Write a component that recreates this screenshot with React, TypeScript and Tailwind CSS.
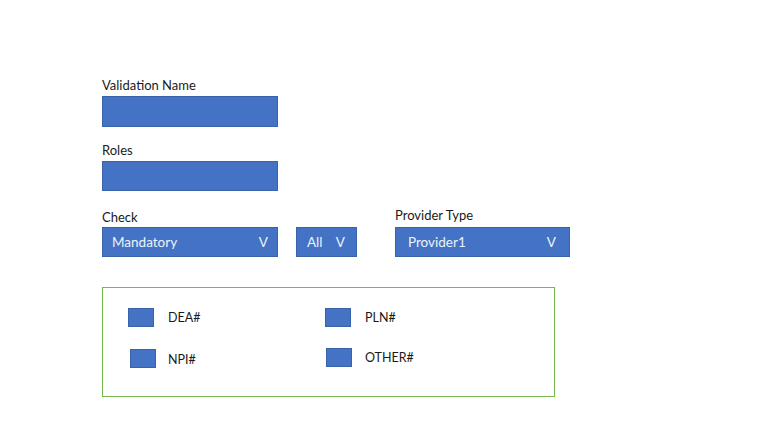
const boxes = [
  { label: "DEA#", box: "ml-0 mt-0", text: "ml-[14px]" },
  { label: "PLN#", box: "ml-0 mt-0", text: "ml-[14px]" },
  { label: "NPI#", box: "ml-[2px] mt-[1px]", text: "ml-[12px] mt-[3px]" },
  { label: "OTHER#", box: "ml-[1px] -mt-[1px]", text: "ml-[13px]" },
];

function Select({ value, width, gap }: { value: string; width: string; gap: string }) {
  return (
    <div
      className={`${width} h-[30px] bg-[#4472c4] border border-[#3a62a8] flex items-center justify-between text-[13.5px] text-[#eef2fa] ${gap}`}
    >
      <span>{value}</span>
      <span>V</span>
    </div>
  );
}

export default function App() {
  return (
    <div className="w-[768px] h-[433px] bg-white pt-[77px] pl-[102px] text-[#1a1a1a] font-['Lato','Liberation_Sans',sans-serif]">
      <div className="text-[13px] leading-[16px]">Validation Name</div>
      <div className="mt-[3px] w-[176px] h-[31px] bg-[#4472c4] border border-[#3a62a8]" />

      <div className="mt-[15px] text-[13px] leading-[16px]">Roles</div>
      <div className="mt-[3px] w-[176px] h-[30px] bg-[#4472c4] border border-[#3a62a8]" />

      <div className="mt-[16px] flex items-end">
        <div className="flex flex-col">
          <div className="text-[13px] leading-[16px]">Check</div>
          <div className="mt-[2px]">
            <Select value="Mandatory" width="w-[176px]" gap="pl-[9px] pr-[9px]" />
          </div>
        </div>
        <div className="ml-[18px]">
          <Select value="All" width="w-[61px]" gap="pl-[10px] pr-[11px]" />
        </div>
        <div className="ml-[38px] flex flex-col">
          <div className="text-[13px] leading-[16px]">Provider Type</div>
          <div className="mt-[4px]">
            <Select value="Provider1" width="w-[175px]" gap="pl-[12px] pr-[13px]" />
          </div>
        </div>
      </div>

      <div className="mt-[30px] w-[453px] h-[110px] border border-[#76b84e] pl-[25px] pt-[20px]">
        <div className="grid grid-cols-[197px_1fr] gap-y-[21px]">
          {boxes.map((b) => (
            <div key={b.label} className="flex items-center">
              <div className={`w-[26px] h-[19px] bg-[#4472c4] border border-[#3a62a8] ${b.box}`} />
              <span className={`text-[12.5px] leading-[16px] ${b.text}`}>{b.label}</span>
            </div>
          ))}
        </div>
      </div>
    </div>
  );
}
